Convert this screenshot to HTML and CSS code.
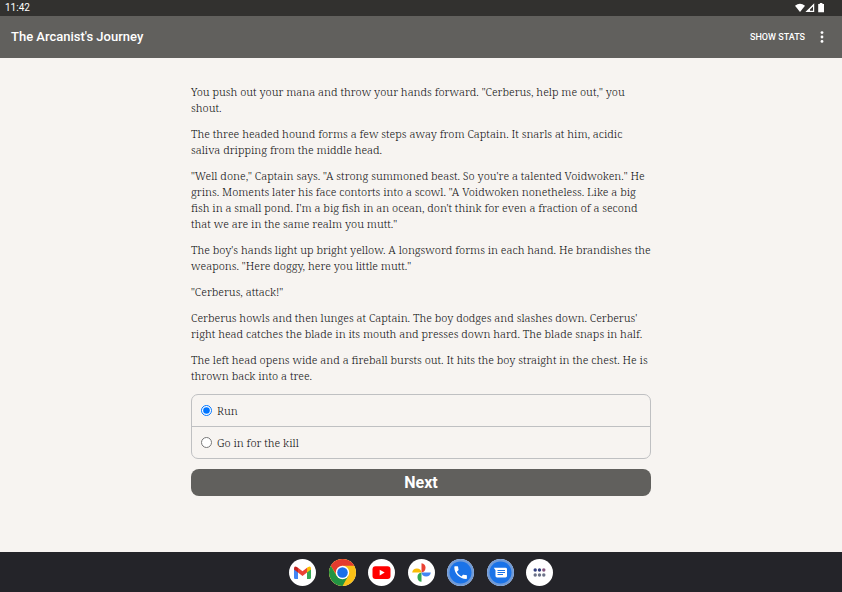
FILE: index.html
```html
<!DOCTYPE html>
<html lang="en">

<head>
    <meta charset="UTF-8">
    <meta name="viewport" content="width=device-width, initial-scale=1.0">
    <title>The Arcanist's Journey</title>
    <link rel="stylesheet" href="styles.css">
</head>

<body>
    <div class="status-bar">
        <span>11:42</span>
        <svg class="status-icons" width="30" height="10" viewBox="0 0 30 10" fill="#fff">
            <path d="M0 2.8Q5 -1.2 10 2.8L5 9z" />
            <path fill-rule="evenodd" d="M10.4 9L19.2 .2V9zM15 7.8h3V3.6l-3 3z" />
            <path d="M24.8 0h2.6v1H29v8.2h-5.8V1h1.6z" />
        </svg>
    </div>

    <header class="toolbar">
        <h1 class="title">The Arcanist's Journey</h1>
        <button class="stats-btn" type="button">SHOW STATS</button>
        <button class="menu-btn" type="button" aria-label="More options">
            <svg width="4" height="12" viewBox="0 0 4 12" fill="#fff">
                <circle cx="2" cy="1.6" r="1.4" />
                <circle cx="2" cy="6" r="1.4" />
                <circle cx="2" cy="10.4" r="1.4" />
            </svg>
        </button>
    </header>

    <main class="story">
        <p>You push out your mana and throw your hands forward. "Cerberus, help me out," you shout.</p>
        <p>The three headed hound forms a few steps away from Captain. It snarls at him, acidic saliva dripping from the middle head.</p>
        <p>"Well done," Captain says. "A strong summoned beast. So you're a talented Voidwoken." He grins. Moments later his face contorts into a scowl. "A Voidwoken nonetheless. Like a big fish in a small pond. I'm a big fish in an ocean, don't think for even a fraction of a second that we are in the same realm you mutt."</p>
        <p>The boy's hands light up bright yellow. A longsword forms in each hand. He brandishes the weapons. "Here doggy, here you little mutt."</p>
        <p>"Cerberus, attack!"</p>
        <p>Cerberus howls and then lunges at Captain. The boy dodges and slashes down. Cerberus' right head catches the blade in its mouth and presses down hard. The blade snaps in half.</p>
        <p>The left head opens wide and a fireball bursts out. It hits the boy straight in the chest. He is thrown back into a tree.</p>

        <form>
            <div class="choices">
                <label class="choice"><input type="radio" name="choice" checked>Run</label>
                <label class="choice"><input type="radio" name="choice">Go in for the kill</label>
            </div>
            <button class="next-btn" type="button">Next</button>
        </form>
    </main>

    <nav class="dock">
        <div class="dock-apps">
            <button class="app" type="button" aria-label="Gmail">
                <svg viewBox="0 0 27 27">
                    <path fill="#4285f4" d="M5 9.5l4 3V20H6.2Q5 20 5 18.8z" />
                    <path fill="#34a853" d="M18 12.5l4-3v9.3q0 1.2-1.2 1.2H18z" />
                    <path fill="#fbbc04" d="M18 8.8l1.2-.9Q22 6.6 22 9.5v1l-4 3z" />
                    <path fill="#c5221f" d="M5 10.5v-1Q5 6.6 7.8 7.9L9 8.8v4.7z" />
                    <path fill="#ea4335" d="M9 8.8l4.5 3.4L18 8.8v4.7l-4.5 3.4L9 13.5z" />
                </svg>
            </button>
            <button class="app" type="button" aria-label="Chrome">
                <svg viewBox="0 0 27 27">
                    <circle cx="13.5" cy="13.5" r="13.5" fill="#fbc116" />
                    <path fill="#e33b2e" d="M1.8 6.8A13.5 13.5 0 0 1 25.2 6.8H13.5L8 16.5z" />
                    <path fill="#229342" d="M1.8 6.8A13.5 13.5 0 0 0 13.5 27l5.8-10.2L13.5 20 7.7 16.9z" />
                    <circle cx="13.5" cy="13.5" r="6.7" fill="#fff" />
                    <circle cx="13.5" cy="13.5" r="5.3" fill="#1a6fe8" />
                </svg>
            </button>
            <button class="app" type="button" aria-label="YouTube">
                <svg viewBox="0 0 27 27">
                    <rect x="4.5" y="7.2" width="18" height="12.8" rx="3" fill="#f00" />
                    <path fill="#fff" d="M11.7 10.7l5 2.9-5 2.9z" />
                </svg>
            </button>
            <button class="app" type="button" aria-label="Photos">
                <svg viewBox="0 0 27 27">
                    <path fill="#ea4335" d="M13.5 4.2a4.7 4.7 0 0 1 0 9.3z" />
                    <path fill="#4285f4" d="M22.8 13.5a4.7 4.7 0 0 1-9.3 0z" />
                    <path fill="#34a853" d="M13.5 22.8a4.7 4.7 0 0 1 0-9.3z" />
                    <path fill="#fbbc04" d="M4.2 13.5a4.7 4.7 0 0 1 9.3 0z" />
                </svg>
            </button>
            <button class="app" type="button" aria-label="Phone">
                <svg viewBox="0 0 27 27">
                    <circle cx="13.5" cy="13.5" r="13.5" fill="#6f9ad8" />
                    <circle cx="13.5" cy="13.5" r="11" fill="#1a73e8" />
                    <path fill="#fff" transform="translate(5.2 5.2) scale(.7)" d="M6.6 10.8c1.4 2.8 3.8 5.1 6.6 6.6l2.2-2.2c.3-.3.7-.4 1-.2 1.1.4 2.3.6 3.6.6.6 0 1 .4 1 1V20c0 .6-.4 1-1 1C10.6 21 3 13.4 3 4c0-.6.4-1 1-1h3.5c.6 0 1 .4 1 1 0 1.3.2 2.5.6 3.6.1.3 0 .7-.2 1z" />
                </svg>
            </button>
            <button class="app" type="button" aria-label="Messages">
                <svg viewBox="0 0 27 27">
                    <circle cx="13.5" cy="13.5" r="13.5" fill="#6f9ad8" />
                    <circle cx="13.5" cy="13.5" r="11" fill="#1a73e8" />
                    <path fill="#fff" d="M6.8 8.8H18.5Q20 8.8 20 10.2V17Q20 18.4 18.5 18.4H10Q8.5 18.4 8.5 17V11.2z" />
                    <path stroke="#1a73e8" d="M10.5 11.5h7.5M10.5 13.5h7.5M10.5 15.5h5.5" />
                </svg>
            </button>
            <button class="app" type="button" aria-label="All apps">
                <svg viewBox="0 0 27 27">
                    <g fill="#34407f">
                        <circle cx="9.2" cy="11" r="1.7" />
                        <circle cx="13.5" cy="11" r="1.7" />
                        <circle cx="17.8" cy="11" r="1.7" fill="#85557e" />
                    </g>
                    <g fill="#6b7288">
                        <circle cx="9.2" cy="16" r="1.7" />
                        <circle cx="13.5" cy="16" r="1.7" />
                        <circle cx="17.8" cy="16" r="1.7" />
                    </g>
                </svg>
            </button>
        </div>
    </nav>
</body>

</html>
```
FILE: styles.css
```css
* {
    box-sizing: border-box;
}

body {
    display: flex;
    flex-direction: column;
    min-height: 100vh;
    margin: 0;
    background-color: #f7f4f1;
    color: #111;
    font-family: "Noto Serif", "Liberation Serif", serif;
    font-size: 11px;
    font-weight: 300;
    line-height: 16px;
}

button {
    padding: 0;
    border: none;
    background: none;
    color: #fff;
    font-family: Roboto, sans-serif;
    cursor: pointer;
}

.status-bar {
    display: flex;
    justify-content: space-between;
    align-items: center;
    height: 16px;
    padding: 0 17px 0 5px;
    background-color: #32312f;
    color: #fff;
    font-family: Roboto, sans-serif;
    font-size: 10px;
    font-weight: 400;
}

.toolbar {
    display: flex;
    align-items: center;
    height: 42px;
    padding: 0 18px 0 11px;
    background-color: #61605d;
    color: #fff;
}

.title {
    flex: 1;
    margin: 0;
    font-family: Roboto, sans-serif;
    font-size: 13px;
    font-weight: 500;
}

.stats-btn {
    margin-right: 15px;
    font-size: 9px;
    font-weight: 500;
}

.menu-btn {
    display: flex;
}

.story {
    flex: 1;
    width: 100%;
    max-width: 460px;
    margin: 0 auto;
    padding: 26px 0;
}

.story p {
    margin: 0 0 10px;
}

.choices {
    border: 1px solid #bfc0c2;
    border-radius: 7px;
}

.choice {
    display: flex;
    align-items: center;
    height: 31px;
    padding-left: 9px;
}

.choice + .choice {
    height: 32px;
    border-top: 1px solid #bfc0c2;
}

.choice input {
    width: 11px;
    height: 11px;
    margin: 0 5px 0 0;
}

.next-btn {
    width: 100%;
    height: 27px;
    margin-top: 10px;
    border-radius: 8px;
    background-color: #61605d;
    font-size: 16px;
    font-weight: 700;
}

.dock {
    display: flex;
    justify-content: center;
    align-items: center;
    height: 40px;
    background-color: #242429;
}

.dock-apps {
    display: flex;
    justify-content: space-between;
    width: 264px;
}

.app {
    width: 27px;
    height: 27px;
    border-radius: 50%;
    background-color: #fff;
}

.app svg {
    display: block;
}
```
